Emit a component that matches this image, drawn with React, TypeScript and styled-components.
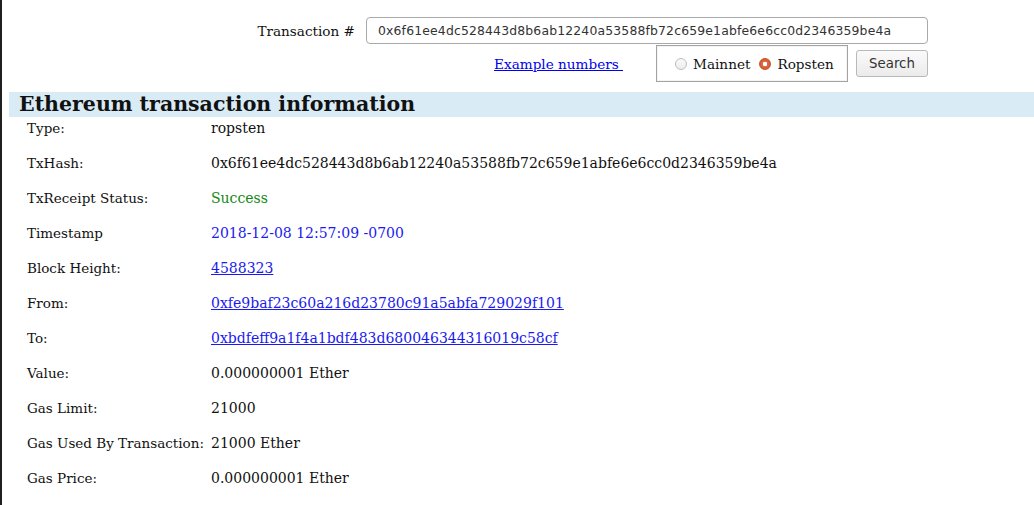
import styled, { createGlobalStyle } from "styled-components";

const GlobalStyle = createGlobalStyle`
  html, body {
    margin: 0;
    padding: 0;
    background: #fff;
  }
  body {
    border-left: 2px solid #1f1f1f;
    min-height: 505px;
    box-sizing: border-box;
    font-family: "DejaVu Serif", serif;
    font-size: 14px;
    color: #111;
  }
`;

const Page = styled.div`
  display: flex;
  flex-direction: column;
`;

const SearchForm = styled.form`
  display: flex;
  flex-direction: column;
  align-items: flex-end;
  padding: 17px 106px 0 0;
`;

const InputRow = styled.div`
  display: flex;
  align-items: center;
  gap: 11px;
`;

const Label = styled.label`
  font-size: 13.6px;
`;

const HashInput = styled.input`
  width: 562px;
  height: 27px;
  box-sizing: border-box;
  border: 1px solid #a9a9a9;
  border-radius: 4px;
  padding: 0 11px;
  font-family: "DejaVu Sans", sans-serif;
  font-size: 12.4px;
  letter-spacing: 0.17px;
  color: #333;
  background: #fff;
  outline: none;
`;

const ControlsRow = styled.div`
  display: flex;
  align-items: center;
  margin-top: 1px;
`;

const ExampleLink = styled.a`
  color: #0000ee;
  text-decoration: underline;
  margin-right: 33px;
  white-space: pre;
  font-size: 13.6px;
`;

const NetworkBox = styled.fieldset`
  display: flex;
  align-items: center;
  width: 192px;
  height: 37px;
  box-sizing: border-box;
  margin: 0 8px 0 0;
  padding: 0 0 0 18px;
  border: 1px solid #a3a3a3;
  box-shadow: inset 0 0 0 1px #f4f4f4;
  font-size: 13.6px;
`;

const RadioLabel = styled.label`
  display: flex;
  align-items: center;
  gap: 6px;
  margin-right: 9px;
`;

const RadioDot = styled.span<{ $checked?: boolean }>`
  width: 12px;
  height: 12px;
  box-sizing: border-box;
  border-radius: 50%;
  border: ${(p) => (p.$checked ? "1px solid #c2532d" : "1px solid #bdbdbd")};
  background: ${(p) =>
    p.$checked
      ? "radial-gradient(circle, #fff 0 2px, #e0693f 2.5px, #c4532d 100%)"
      : "linear-gradient(#fafafa, #ececec)"};
`;

const SearchButton = styled.button`
  width: 72px;
  height: 27px;
  border: 1px solid #b9b9b9;
  border-radius: 3px;
  background: linear-gradient(#fafafa, #ebebeb);
  font-family: "DejaVu Sans", sans-serif;
  font-size: 13.33px;
  color: #333;
  padding: 0;
`;

const TitleBar = styled.h2`
  margin: 10px 0 0 7px;
  padding: 0 0 0 10px;
  height: 25px;
  line-height: 25px;
  background: #d9ebf5;
  font-family: "DejaVu Serif", serif;
  font-weight: bold;
  font-size: 20.5px;
  color: #111;
`;

const InfoTable = styled.div`
  display: grid;
  grid-template-columns: 184px 1fr;
  grid-auto-rows: 35px;
  padding: 0 0 0 25px;
  margin-top: -7px;
  align-items: center;
`;

const Cell = styled.div`
  white-space: nowrap;
  font-size: 13.5px;
`;

const Value = styled.div<{ $tone?: "green" | "blue" }>`
  white-space: nowrap;
  color: ${(p) =>
    p.$tone === "green" ? "#138a13" : p.$tone === "blue" ? "#1a1aee" : "#111"};
`;

const ValueLink = styled.a`
  color: #1a1aee;
  text-decoration: underline;
`;

const rows: { label: string; value: string; tone?: "green" | "blue"; link?: boolean }[] = [
  { label: "Type:", value: "ropsten" },
  { label: "TxHash:", value: "0x6f61ee4dc528443d8b6ab12240a53588fb72c659e1abfe6e6cc0d2346359be4a" },
  { label: "TxReceipt Status:", value: "Success", tone: "green" },
  { label: "Timestamp", value: "2018-12-08 12:57:09 -0700", tone: "blue" },
  { label: "Block Height:", value: "4588323", link: true },
  { label: "From:", value: "0xfe9baf23c60a216d23780c91a5abfa729029f101", link: true },
  { label: "To:", value: "0xbdfeff9a1f4a1bdf483d680046344316019c58cf", link: true },
  { label: "Value:", value: "0.000000001 Ether" },
  { label: "Gas Limit:", value: "21000" },
  { label: "Gas Used By Transaction:", value: "21000 Ether" },
  { label: "Gas Price:", value: "0.000000001 Ether" },
];

export default function App() {
  return (
    <>
      <GlobalStyle />
      <Page>
        <SearchForm onSubmit={(e) => e.preventDefault()}>
          <InputRow>
            <Label htmlFor="tx">Transaction #</Label>
            <HashInput
              id="tx"
              defaultValue="0x6f61ee4dc528443d8b6ab12240a53588fb72c659e1abfe6e6cc0d2346359be4a"
            />
          </InputRow>
          <ControlsRow>
            <ExampleLink href="#">Example numbers </ExampleLink>
            <NetworkBox>
              <RadioLabel>
                <RadioDot />
                Mainnet
              </RadioLabel>
              <RadioLabel>
                <RadioDot $checked />
                Ropsten
              </RadioLabel>
            </NetworkBox>
            <SearchButton type="submit">Search</SearchButton>
          </ControlsRow>
        </SearchForm>
        <TitleBar>Ethereum transaction information</TitleBar>
        <InfoTable>
          {rows.map((r) => (
            <>
              <Cell key={r.label + "-l"}>{r.label}</Cell>
              <Value key={r.label + "-v"} $tone={r.tone}>
                {r.link ? <ValueLink href="#">{r.value}</ValueLink> : r.value}
              </Value>
            </>
          ))}
        </InfoTable>
      </Page>
    </>
  );
}
